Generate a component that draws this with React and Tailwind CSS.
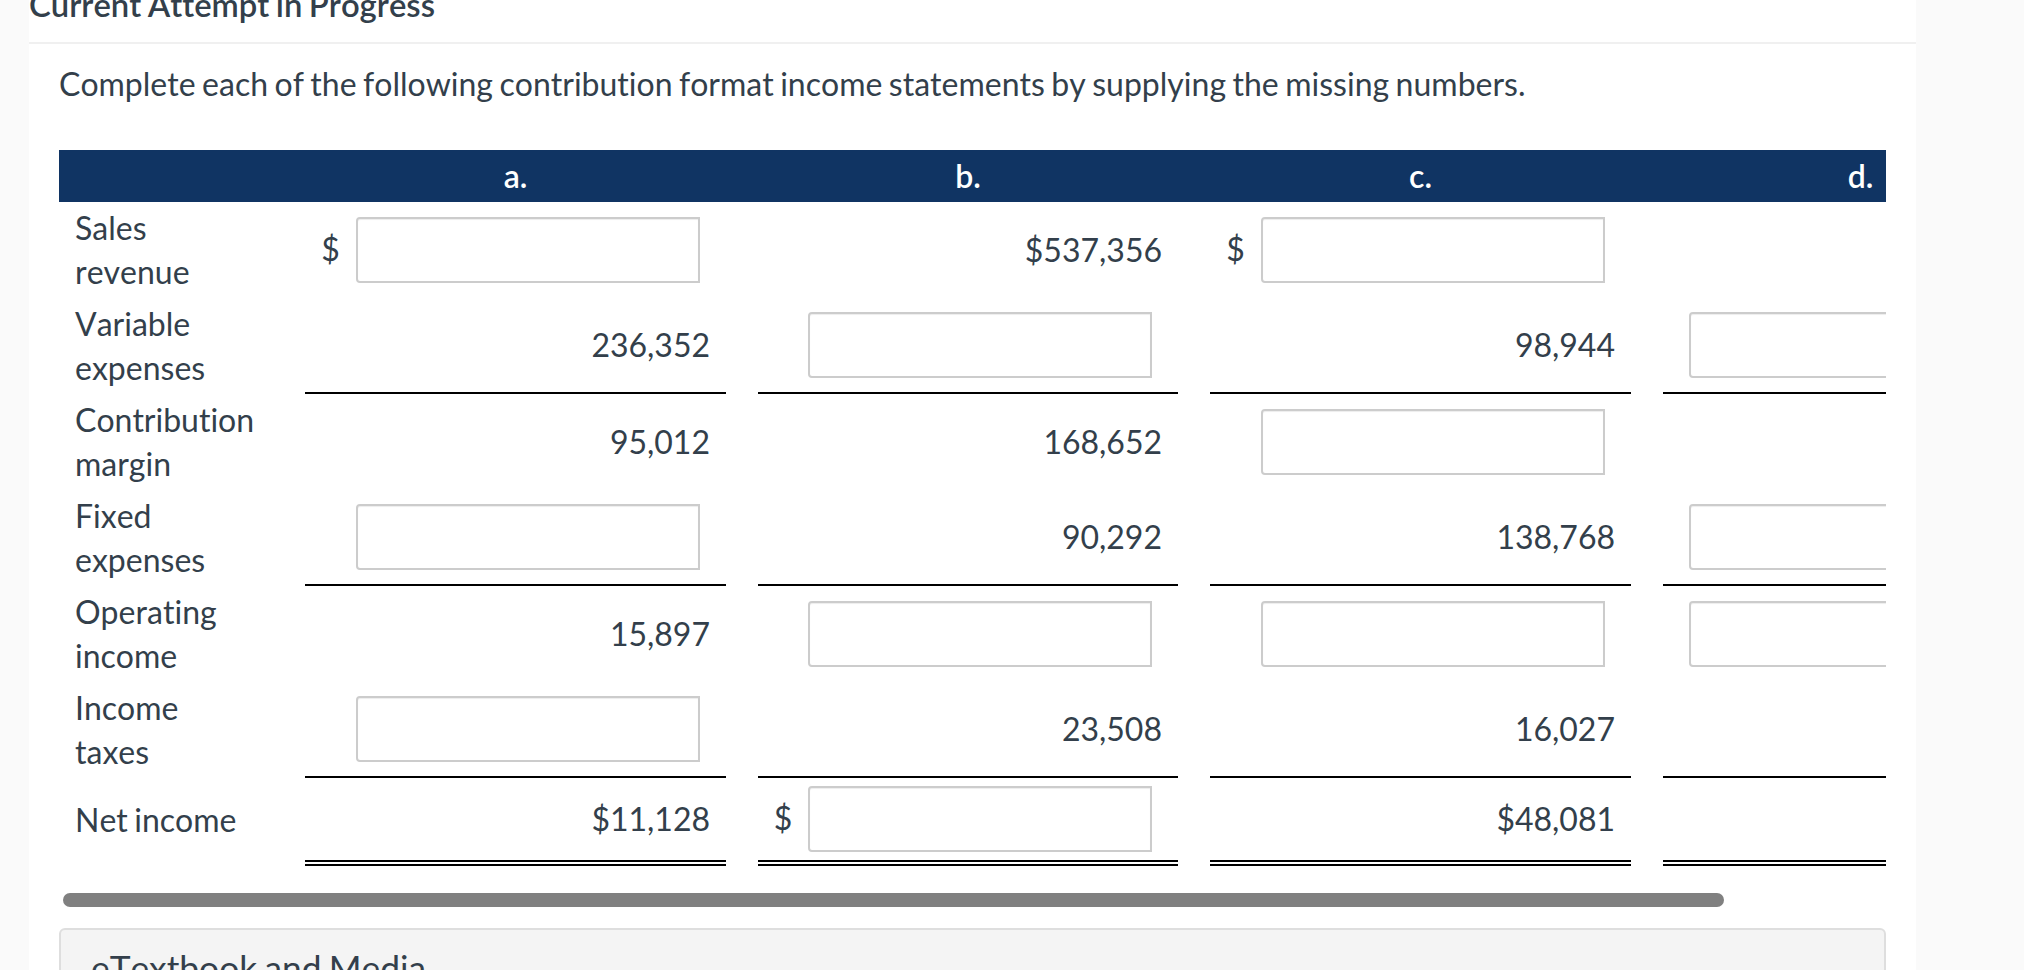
const rows = [
  { label: ['Sales', 'revenue'], cells: [['$', null], [null, '$537,356'], ['$', null], [null, '']], rule: '' },
  { label: ['Variable', 'expenses'], cells: [[null, '236,352'], [null, null], [null, '98,944'], [null, null]], rule: 'single' },
  { label: ['Contribution', 'margin'], cells: [[null, '95,012'], [null, '168,652'], [null, null], [null, '']], rule: '' },
  { label: ['Fixed', 'expenses'], cells: [[null, null], [null, '90,292'], [null, '138,768'], [null, null]], rule: 'single' },
  { label: ['Operating', 'income'], cells: [[null, '15,897'], [null, null], [null, null], [null, null]], rule: '' },
  { label: ['Income', 'taxes'], cells: [[null, null], [null, '23,508'], [null, '16,027'], [null, '']], rule: 'single' },
  { label: ['Net income'], cells: [[null, '$11,128'], ['$', null], [null, '$48,081'], [null, '']], rule: 'double' },
];

const ruleClass = {
  '': '',
  single: 'border-b-2 border-black',
  double: 'border-b-[6px] border-double border-black',
};

const Cell = ({ symbol, value, rule, last }) => {
  return (
    <>
      <td className={`text-center align-middle ${ruleClass[rule]}`}>
        {symbol && <span className="relative -top-px">{symbol}</span>}
      </td>
      <td className={`align-middle ${ruleClass[rule]}`}>
        {value === null ? (
          <input
            type="text"
            className="block h-[66px] w-[344px] rounded-l-[4px] border-2 border-[#cccccc] bg-white shadow-[inset_0_1px_1px_rgba(0,0,0,0.075)]"
          />
        ) : (
          <div className="pr-4 text-right">{value}</div>
        )}
      </td>
      {!last && <td />}
    </>
  );
};

const App = () => {
  return (
    <div className="h-[970px] overflow-hidden bg-[#fafafa] font-['Lato',sans-serif] text-[#333f4b] [font-kerning:none] [font-variant-ligatures:none] [word-spacing:-1.7px]">
      <div className="mx-[29px] h-full w-[1887px] bg-white">
        <h2 className="h-[44px] border-b-2 border-[#f0f0f0] text-[32.8px] font-semibold leading-[10px]">
          Current Attempt in Progress
        </h2>
        <div className="px-[30px]">
          <p className="mt-[18px] text-[32px] leading-[44px]">
            Complete each of the following contribution format income statements by supplying the missing numbers.
          </p>
          <div className="mt-[44px] w-[1827px] overflow-hidden">
            <table className="w-[1999px] table-fixed border-separate border-spacing-0 text-[32px] leading-[44px]">
              <colgroup>
                <col className="w-[246px]" />
                <col className="w-[51px]" />
                <col className="w-[370px]" />
                <col className="w-[32px]" />
                <col className="w-[50px]" />
                <col className="w-[370px]" />
                <col className="w-[32px]" />
                <col className="w-[51px]" />
                <col className="w-[370px]" />
                <col className="w-[32px]" />
                <col className="w-[26px]" />
                <col className="w-[369px]" />
              </colgroup>
              <thead>
                <tr className="h-[52px] bg-[#103463] text-white">
                  <th />
                  <th colSpan={2} className="font-semibold">a.</th>
                  <th />
                  <th colSpan={2} className="font-semibold">b.</th>
                  <th />
                  <th colSpan={2} className="font-semibold">c.</th>
                  <th />
                  <th colSpan={2} className="font-semibold">d.</th>
                </tr>
              </thead>
              <tbody>
                {rows.map((row) => (
                  <tr key={row.label[0]} className={row.rule === 'double' ? 'h-[88px]' : 'h-[96px]'}>
                    <td className={`pl-4 align-middle ${row.rule === 'double' ? 'pb-1' : ''}`}>
                      {row.label.map((line) => (
                        <div key={line}>{line}</div>
                      ))}
                    </td>
                    {row.cells.map(([symbol, value], i) => (
                      <Cell key={i} symbol={symbol} value={value} rule={row.rule} last={i === 3} />
                    ))}
                  </tr>
                ))}
              </tbody>
            </table>
          </div>
          <div className="mt-[27px] ml-[4px] h-[14px] w-[1661px] rounded-[7px] bg-[#808080]" />
          <div className="mt-[21px] h-[120px] rounded-t-md border-2 border-[#dedede] bg-[#f4f4f4] px-[30px] pt-[12px] text-[35.3px]">
            eTextbook and Media
          </div>
        </div>
      </div>
    </div>
  );
};

export default App;
